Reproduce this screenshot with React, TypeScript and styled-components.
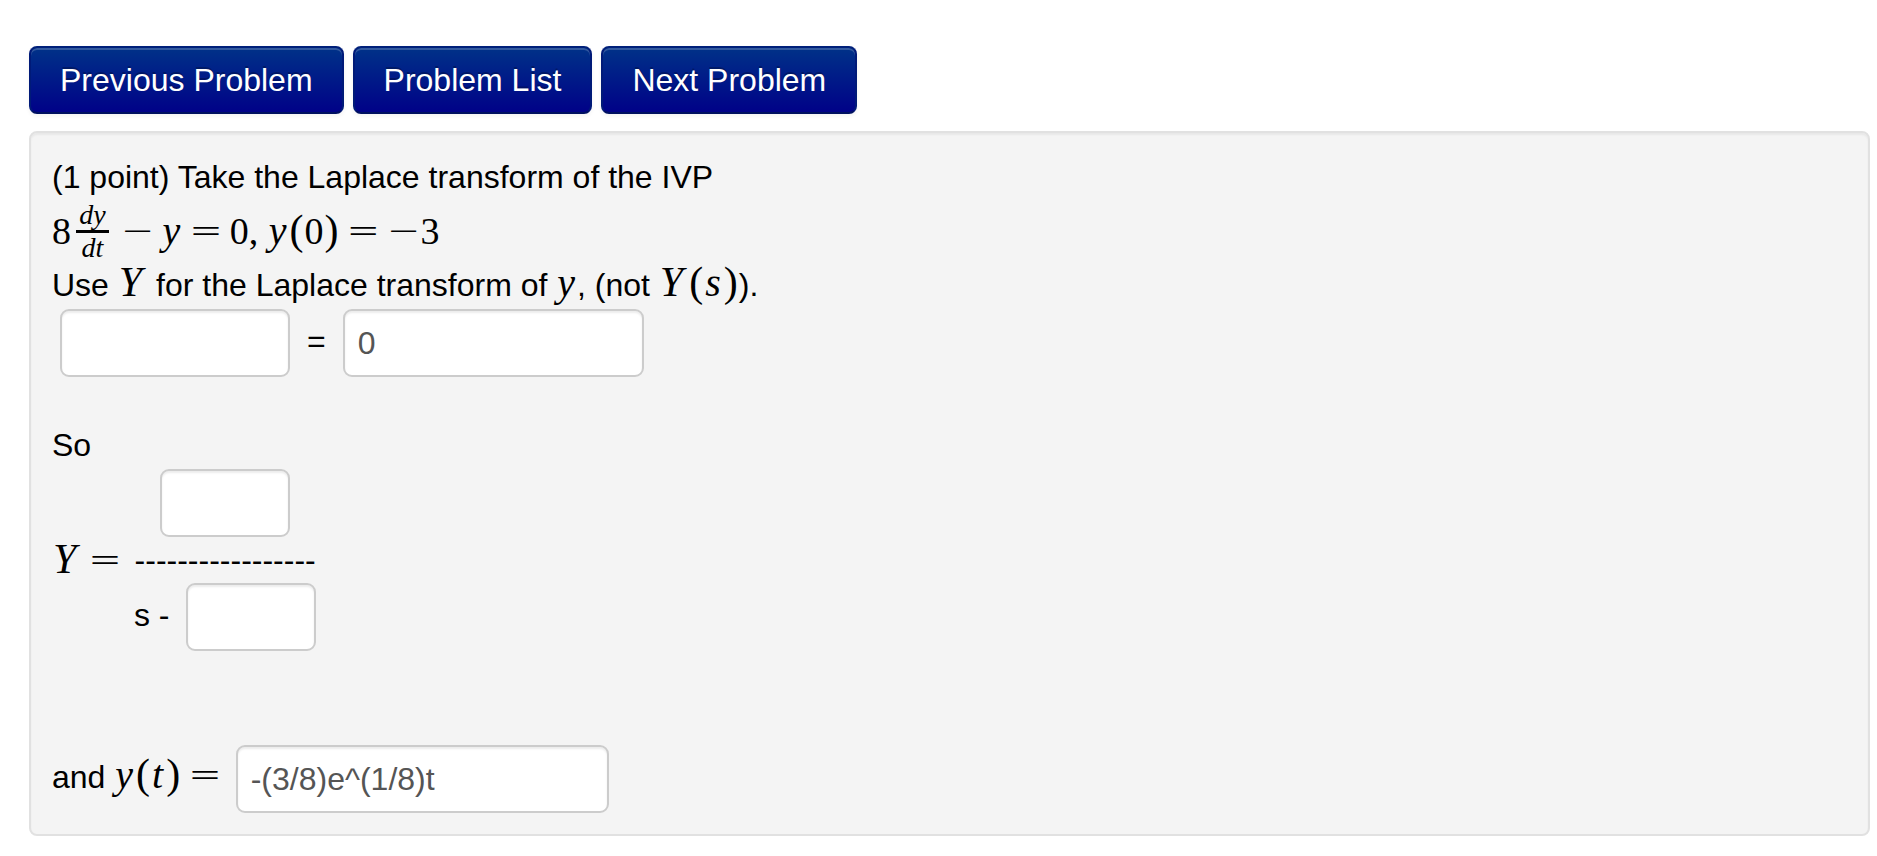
import React from "react";
import styled, { createGlobalStyle } from "styled-components";

const GlobalStyle = createGlobalStyle`
  *, *::before, *::after { box-sizing: border-box; }
  body {
    margin: 0;
    background: #fff;
    color: #000;
    font-family: "Liberation Sans", Arial, Helvetica, sans-serif;
    font-size: 32px;
    line-height: 40px;
  }
`;

const Page = styled.main`
  padding: 46px 7px 20px 29px;
`;

const Nav = styled.nav`
  display: flex;
  flex-wrap: wrap;
  gap: 9px;
  margin-bottom: 17px;
`;

const NavButton = styled.button`
  height: 68px;
  padding: 0 29px;
  border: 2px solid;
  border-color: #00207a #001a78 #001160;
  border-radius: 8px;
  background: linear-gradient(to bottom, #003388, #000088) border-box;
  box-shadow: inset 0 2px 0 rgba(255, 255, 255, 0.2), 0 2px 4px rgba(0, 0, 0, 0.05);
  color: #fff;
  font: inherit;
  text-shadow: 0 -2px 0 rgba(0, 0, 0, 0.25);
  white-space: nowrap;
  cursor: pointer;
`;

const Panel = styled.form`
  padding: 24px 21px 21px;
  border: 2px solid #e1e1e1;
  border-radius: 8px;
  background: #f4f4f4;
  box-shadow: inset 0 2px 2px rgba(0, 0, 0, 0.05);
`;

const Line = styled.p`
  margin: 0;
`;

const Row = styled.div<{ $top?: number; $gap?: number; $indent?: number }>`
  display: flex;
  align-items: center;
  gap: ${(p) => p.$gap ?? 0}px;
  margin-top: ${(p) => p.$top ?? 0}px;
  padding-left: ${(p) => p.$indent ?? 0}px;
`;

const Label = styled.label`
  padding-bottom: 4px;
  white-space: nowrap;
`;

const Equation = styled.div`
  display: flex;
  align-items: center;
  height: 68px;
`;

const MathText = styled.span`
  font-family: "Liberation Serif", "Times New Roman", serif;
  font-size: 38px;
  line-height: 1px;
  white-space: nowrap;
`;

const Var = styled.i<{ $capital?: boolean }>`
  font-size: ${(p) => (p.$capital ? 42 : 40)}px;
  padding: 0 ${(p) => (p.$capital ? 5 : 2)}px 0 1px;
`;

const Paren = styled.span`
  font-size: 42px;
  padding: 0 1px;
`;

const Operator = styled.span<{ $unary?: boolean }>`
  font-family: "DejaVu Sans", sans-serif;
  font-weight: 200;
  font-size: 40px;
  padding: 0 ${(p) => (p.$unary ? 0 : 7)}px;
`;

const Fraction = styled.span`
  display: flex;
  flex-direction: column;
  align-items: center;
  width: 33px;
  margin: 0 5px;
  font-family: "Liberation Serif", "Times New Roman", serif;
  font-size: 28px;
  font-style: italic;
  line-height: 30px;
`;

const Bar = styled.span`
  width: 100%;
  height: 3px;
  background: #000;
`;

const Answer = styled.input<{ $width: number }>`
  width: ${(p) => p.$width}px;
  height: 68px;
  padding: 0 13px;
  border: 2px solid #ccc;
  border-radius: 9px;
  background: #fff;
  box-shadow: inset 0 2px 2px rgba(0, 0, 0, 0.075);
  color: #555;
  font: inherit;
`;

const Quotient = styled.div`
  display: flex;
  flex-direction: column;
  align-items: center;
  gap: 3px;
`;

export default function App() {
  return (
    <>
      <GlobalStyle />
      <Page>
        <Nav aria-label="Problems">
          <NavButton type="button">Previous Problem</NavButton>
          <NavButton type="button">Problem List</NavButton>
          <NavButton type="button">Next Problem</NavButton>
        </Nav>
        <Panel onSubmit={(e) => e.preventDefault()}>
          <Line>(1 point) Take the Laplace transform of the IVP</Line>
          <Equation>
            <MathText>8</MathText>
            <Fraction>
              <span>dy</span>
              <Bar />
              <span>dt</span>
            </Fraction>
            <MathText>
              <Operator>−</Operator>
              <Var>y</Var>
              <Operator>=</Operator>0, <Var>y</Var>
              <Paren>(</Paren>0<Paren>)</Paren>
              <Operator>=</Operator>
              <Operator $unary>−</Operator>3
            </MathText>
          </Equation>
          <Line>
            Use <MathText><Var $capital>Y</Var></MathText> for the Laplace transform of{" "}
            <MathText><Var>y</Var></MathText>, (not{" "}
            <MathText>
              <Var $capital>Y</Var>
              <Paren>(</Paren><Var>s</Var><Paren>)</Paren>
            </MathText>
            ).
          </Line>
          <Row $top={4} $gap={17} $indent={8}>
            <Answer $width={230} id="left" aria-label="Left side of the equation" />
            <Label htmlFor="right">=</Label>
            <Answer $width={301} id="right" defaultValue="0" />
          </Row>
          <Row $top={48}>So</Row>
          <Row $top={4} $gap={5}>
            <MathText>
              <Var $capital>Y</Var>
              <Operator>=</Operator>
            </MathText>
            <Quotient>
              <Answer $width={130} aria-label="Numerator" />
              <span>-----------------</span>
              <Row $gap={17}>
                <Label htmlFor="pole">s -</Label>
                <Answer $width={130} id="pole" />
              </Row>
            </Quotient>
          </Row>
          <Row $top={94} $gap={7}>
            <Label htmlFor="solution">
              and{" "}
              <MathText>
                <Var>y</Var>
                <Paren>(</Paren><Var>t</Var><Paren>)</Paren>
                <Operator>=</Operator>
              </MathText>
            </Label>
            <Answer $width={373} id="solution" defaultValue="-(3/8)e^(1/8)t" />
          </Row>
        </Panel>
      </Page>
    </>
  );
}
